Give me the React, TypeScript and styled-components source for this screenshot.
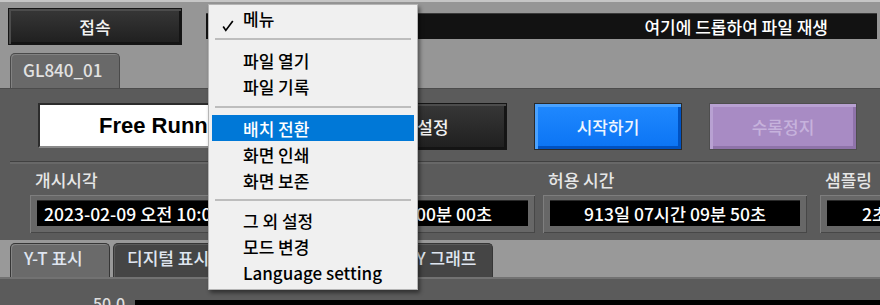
import React from 'react';
import styled, { createGlobalStyle, css } from 'styled-components';

const GlobalStyle = createGlobalStyle`
  html, body {
    margin: 0;
    padding: 0;
    background: #969696;
  }
  body {
    font-family: "Noto Sans CJK KR", "Noto Sans", sans-serif;
  }
`;

const Screen = styled.div`
  position: relative;
  width: 880px;
  height: 305px;
  overflow: hidden;
  background: #969696;
  font-family: "Noto Sans CJK KR", "Noto Sans", sans-serif;
  font-size: 17px;
  font-weight: 500;
  color: #e8e8e8;
`;

const TopBar = styled.div`
  display: flex;
  align-items: flex-start;
  height: 45px;
  box-sizing: border-box;
  padding: 6px 3px 0 8px;
  border-top: 2px solid #c6c6c6;
`;

type Tone = 'dark' | 'blue' | 'purple';

const tones = {
  dark: css`
    background: linear-gradient(#373737, #1f1f1f);
    color: #f2f2f2;
    border-color: #151515;
    box-shadow: inset 2px 2px 0 #4c4c4c, inset -2px -2px 0 #141414;
  `,
  blue: css`
    background: linear-gradient(#2089ff, #0b74f4);
    color: #eef5ff;
    border-color: #2a2a2a;
    box-shadow: inset 3px 3px 0 #4aa2ff, inset -3px -3px 0 #0052c2;
  `,
  purple: css`
    background: #a88bc4;
    color: #c6b2dc;
    border-color: #4e4e4e;
    box-shadow: inset 3px 3px 0 #b8a1d2, inset -3px -3px 0 #8f73aa;
  `,
};

const BevelButton = styled.button<{ $tone: Tone; $w: number; $h: number }>`
  flex: none;
  width: ${p => p.$w}px;
  height: ${p => p.$h}px;
  padding: 0;
  border: 1px solid;
  font: inherit;
  font-size: 17px;
  ${p => tones[p.$tone]}
`;

const DropZone = styled.div`
  flex: 1;
  height: 26px;
  margin: 5px 0 0 24px;
  box-sizing: border-box;
  padding-right: 49px;
  background: #121212;
  border-top: 1px solid #3a3a3a;
  color: #fff;
  text-align: right;
  line-height: 25px;
`;

const DeviceTabBar = styled.div`
  display: flex;
  align-items: flex-end;
  height: 43px;
  box-sizing: border-box;
  padding: 8px 0 0 10px;
`;

const DeviceTab = styled.div`
  width: 110px;
  height: 35px;
  box-sizing: border-box;
  padding: 3px 0 0 12px;
  background: #696969;
  border: 1px solid #4a4a4a;
  border-bottom: none;
  border-radius: 5px 5px 0 0;
  box-shadow: inset 1px 1px 0 #828282;
  color: #e2e2e2;
  line-height: 26px;
`;

const Panel = styled.div`
  display: flex;
  flex-direction: column;
  height: 152px;
  background: #5b5b5b;
  border-top: 1px solid #4c4c4c;
  box-sizing: border-box;
`;

const ControlRow = styled.div`
  display: flex;
  align-items: flex-start;
  gap: 27px;
  height: 72px;
  box-sizing: border-box;
  padding: 14px 0 0 38px;
`;

const ModeDisplay = styled.div`
  flex: none;
  display: flex;
  align-items: center;
  width: 294px;
  height: 45px;
  box-sizing: border-box;
  padding-left: 59px;
  background: #fff;
  border: 2px solid;
  border-color: #2c2c2c #8a8a8a #8a8a8a #2c2c2c;
  color: #000;
  font-family: "Liberation Sans", Arial, sans-serif;
  font-weight: bold;
  font-size: 22px;
`;

const Divider = styled.div`
  height: 3px;
  margin-left: 10px;
  border-top: 1px solid #414141;
  background: #686868;
  box-sizing: border-box;
`;

const InfoRow = styled.div`
  display: flex;
  flex: 1;
  padding-left: 30px;
`;

const Field = styled.div<{ $w: number; $mr: number }>`
  flex: none;
  display: flex;
  flex-direction: column;
  width: ${p => p.$w}px;
  margin-right: ${p => p.$mr}px;
`;

const FieldLabel = styled.div`
  height: 31px;
  padding-left: 5px;
  line-height: 31px;
  color: #e6e6e6;
`;

const FieldFrame = styled.div`
  height: 38px;
  box-sizing: border-box;
  padding: 5px 7px;
  background: #676767;
  box-shadow: inset 1px 1px 0 #7e7e7e, inset -1px -1px 0 #474747;
`;

const ValueBox = styled.div<{ $align: 'left' | 'center' }>`
  height: 26px;
  box-sizing: border-box;
  padding: 0 7px;
  background: #000;
  border-top: 1px solid #2a2a2a;
  color: #fff;
  font-size: 17.5px;
  line-height: 25px;
  white-space: nowrap;
  overflow: hidden;
  text-align: ${p => p.$align};
`;

const ViewTabBar = styled.div`
  display: flex;
  align-items: flex-end;
  gap: 3px;
  height: 37px;
  box-sizing: border-box;
  padding-left: 10px;
  background: #999;
`;

const ViewTab = styled.div<{ $active?: boolean; $w: number }>`
  flex: none;
  width: ${p => p.$w}px;
  height: 34px;
  box-sizing: border-box;
  padding: 0 0 0 13px;
  background: ${p => (p.$active ? '#6a6a6a' : '#454545')};
  border: 1px solid #363636;
  border-bottom: none;
  border-radius: 5px 5px 0 0;
  box-shadow: inset 1px 1px 0 ${p => (p.$active ? '#858585' : '#5a5a5a')};
  color: #dfe5f0;
  line-height: 28px;
  white-space: nowrap;
  overflow: hidden;
`;

const GraphArea = styled.div`
  display: flex;
  align-items: flex-start;
  height: 28px;
  box-sizing: border-box;
  background: #5b5b5b;
  border-top: 2px solid #727272;
`;

const ScaleLabel = styled.div`
  margin: 14px 0 0 93px;
  width: 42px;
  font-size: 16px;
  line-height: 20px;
  color: #dedede;
`;

const Chart = styled.div`
  flex: 1;
  height: 10px;
  margin-top: 21px;
  background: #000;
`;

const ContextMenu = styled.div`
  position: absolute;
  left: 208px;
  top: 4px;
  width: 210px;
  box-sizing: border-box;
  padding: 0 0 4px;
  background: #f0f0f0;
  border: 1px solid #b5b5b5;
  box-shadow: 2px 3px 4px rgba(0, 0, 0, 0.45);
  color: #000;
  font-size: 17px;
`;

const MenuItem = styled.div<{ $selected?: boolean }>`
  display: flex;
  align-items: center;
  height: 26px;
  margin: 0 3px;
  background: ${p => (p.$selected ? '#0078d7' : 'transparent')};
  color: ${p => (p.$selected ? '#fff' : '#000')};
  white-space: nowrap;
`;

const Gutter = styled.div`
  flex: none;
  width: 31px;
  height: 100%;
  position: relative;
`;

const CheckMark = styled.svg`
  position: absolute;
  left: 10px;
  top: 15px;
`;

const MenuSeparator = styled.div<{ $h: number }>`
  display: flex;
  align-items: center;
  height: ${p => p.$h}px;
  margin: 0 6px;
  &::after {
    content: '';
    flex: 1;
    height: 2px;
    background: #bdbdbd;
  }
`;

const Check = () => (
  <CheckMark width="12" height="12" viewBox="0 0 12 12">
    <path d="M1.2 6.6 L3.8 10.4 L10.8 1" fill="none" stroke="#000" strokeWidth="1.7" />
  </CheckMark>
);

export default function App() {
  return (
    <Screen>
      <GlobalStyle />
      <TopBar>
        <BevelButton $tone="dark" $w={174} $h={37}>접속</BevelButton>
        <DropZone>여기에 드롭하여 파일 재생</DropZone>
      </TopBar>

      <DeviceTabBar>
        <DeviceTab>GL840_01</DeviceTab>
      </DeviceTabBar>

      <Panel>
        <ControlRow>
          <ModeDisplay>Free Running</ModeDisplay>
          <BevelButton $tone="dark" $w={148} $h={47}>설정</BevelButton>
          <BevelButton $tone="blue" $w={148} $h={47}>시작하기</BevelButton>
          <BevelButton $tone="purple" $w={148} $h={47}>수록정지</BevelButton>
        </ControlRow>
        <Divider />
        <InfoRow>
          <Field $w={248} $mr={9}>
            <FieldLabel>개시시각</FieldLabel>
            <FieldFrame>
              <ValueBox $align="left">2023-02-09 오전 10:00:00</ValueBox>
            </FieldFrame>
          </Field>
          <Field $w={248} $mr={8}>
            <FieldLabel>수록 시간</FieldLabel>
            <FieldFrame>
              <ValueBox $align="center">0일 00시간 00분 00초</ValueBox>
            </FieldFrame>
          </Field>
          <Field $w={264} $mr={13}>
            <FieldLabel>허용 시간</FieldLabel>
            <FieldFrame>
              <ValueBox $align="center">913일 07시간 09분 50초</ValueBox>
            </FieldFrame>
          </Field>
          <Field $w={110} $mr={0}>
            <FieldLabel>샘플링</FieldLabel>
            <FieldFrame>
              <ValueBox $align="center">2초</ValueBox>
            </FieldFrame>
          </Field>
        </InfoRow>
      </Panel>

      <ViewTabBar>
        <ViewTab $active $w={100}>Y-T 표시</ViewTab>
        <ViewTab $w={110}>디지털 표시</ViewTab>
        <ViewTab $w={159}>리포트 표시</ViewTab>
        <ViewTab $w={105}>X-Y 그래프</ViewTab>
      </ViewTabBar>

      <GraphArea>
        <ScaleLabel>50.0</ScaleLabel>
        <Chart />
      </GraphArea>

      <ContextMenu>
        <MenuItem>
          <Gutter>
            <Check />
          </Gutter>
          메뉴
        </MenuItem>
        <MenuSeparator $h={16} />
        <MenuItem>
          <Gutter />
          파일 열기
        </MenuItem>
        <MenuItem>
          <Gutter />
          파일 기록
        </MenuItem>
        <MenuSeparator $h={16} />
        <MenuItem $selected>
          <Gutter />
          배치 전환
        </MenuItem>
        <MenuItem>
          <Gutter />
          화면 인쇄
        </MenuItem>
        <MenuItem>
          <Gutter />
          화면 보존
        </MenuItem>
        <MenuSeparator $h={14} />
        <MenuItem>
          <Gutter />그 외 설정
        </MenuItem>
        <MenuItem>
          <Gutter />
          모드 변경
        </MenuItem>
        <MenuItem>
          <Gutter />
          Language setting
        </MenuItem>
      </ContextMenu>
    </Screen>
  );
}
